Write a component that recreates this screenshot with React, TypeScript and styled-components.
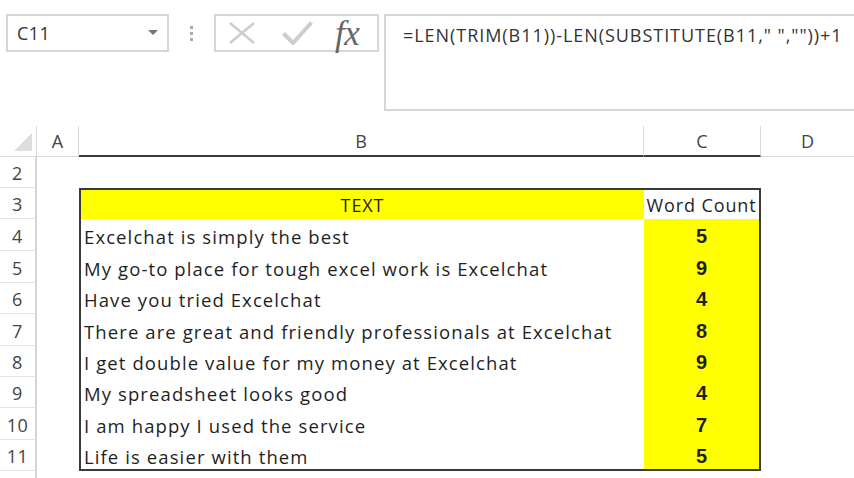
import React from "react";
import styled, { createGlobalStyle } from "styled-components";

const Global = createGlobalStyle`
  html, body { margin: 0; padding: 0; background: #fff; }
  body { font-family: "Open Sans", "Liberation Sans", sans-serif; }
`;

const FONT = `"Open Sans", "Liberation Sans", sans-serif`;
const LIGHT = "#d9d9d9";
const DARK = "#3a3a3a";
const YELLOW = "#ffff00";

const Page = styled.div`
  width: 854px;
  height: 478px;
  overflow: hidden;
  background: #fff;
  display: flex;
  flex-direction: column;
`;

const Toolbar = styled.div`
  display: flex;
  align-items: flex-start;
  box-sizing: border-box;
  height: 126px;
  padding: 14px 0 0 6px;
  flex-shrink: 0;
  & > * { flex-shrink: 0; }
`;

const NameBox = styled.div`
  box-sizing: border-box;
  width: 163px;
  height: 38px;
  border: 2px solid #d6d6d6;
  display: flex;
  align-items: center;
  justify-content: space-between;
  padding: 0 9px 0 9px;
  font-family: ${FONT};
  font-size: 18px;
  letter-spacing: 0.4px;
  color: #333;
`;

const DropArrow = styled.span`
  width: 0;
  height: 0;
  border-left: 5px solid transparent;
  border-right: 5px solid transparent;
  border-top: 5px solid #777;
  margin-bottom: 2px;
`;

const DotsArea = styled.div`
  box-sizing: border-box;
  width: 45px;
  height: 38px;
  display: flex;
  flex-direction: column;
  justify-content: center;
  gap: 3px;
  padding-left: 21px;
`;

const Dot = styled.span`
  width: 3px;
  height: 3px;
  background: #aaa;
`;

const ButtonBox = styled.div`
  box-sizing: border-box;
  width: 165px;
  height: 38px;
  border: 2px solid #d6d6d6;
  display: flex;
  align-items: center;
  padding-left: 13px;
`;

const IconSlot = styled.span<{ $ml: number }>`
  display: flex;
  margin-left: ${(p) => p.$ml}px;
`;

const FxText = styled.span`
  font-family: "Liberation Serif", "DejaVu Serif", serif;
  font-style: italic;
  font-size: 35px;
  color: #666;
  margin-left: 22px;
  line-height: 1;
  margin-top: 1px;
  letter-spacing: -0.5px;
`;

const FormulaBox = styled.div`
  box-sizing: border-box;
  margin-left: 5px;
  width: 490px;
  height: 97px;
  border: 2px solid #d6d6d6;
  padding: 8px 0 0 17px;
  font-family: ${FONT};
  font-size: 18px;
  letter-spacing: 0.95px;
  line-height: 22px;
  color: #333;
  white-space: nowrap;
`;

const Sheet = styled.div`
  display: flex;
  flex-direction: column;
`;

const HeaderRow = styled.div`
  display: flex;
  height: 31px;
`;

const ColHeader = styled.div<{ $w?: number; $dark?: boolean; $last?: boolean }>`
  box-sizing: border-box;
  ${(p) => (p.$w ? `width: ${p.$w}px; flex-shrink: 0;` : "flex: 1;")}
  height: 31px;
  display: flex;
  align-items: center;
  justify-content: center;
  position: relative;
  font-family: ${FONT};
  font-size: 18px;
  color: #444;
  border-right: ${(p) => (p.$last ? "none" : `1px solid ${LIGHT}`)};
  border-bottom: ${(p) => (p.$dark ? `2px solid ${DARK}` : `1px solid ${LIGHT}`)};
  padding-top: ${(p) => (p.$dark ? "1px" : "0")};
`;

const CornerTriangle = styled.span`
  position: absolute;
  right: 4px;
  bottom: 5px;
  width: 0;
  height: 0;
  border-left: 18px solid transparent;
  border-bottom: 18px solid #dedede;
`;

const Row = styled.div<{ $h: number }>`
  display: flex;
  height: ${(p) => p.$h}px;
`;

const RowHeader = styled.div`
  box-sizing: border-box;
  width: 37px;
  flex-shrink: 0;
  display: flex;
  align-items: flex-end;
  justify-content: center;
  padding-bottom: 5px;
  font-family: ${FONT};
  font-size: 18px;
  letter-spacing: 0.5px;
  line-height: 1;
  color: #444;
  border-right: 2px solid #d4d4d4;
  border-bottom: 1px solid #e3e3e3;
`;

const Cell = styled.div<{
  $w?: number;
  $bg?: string;
  $left?: boolean;
  $right?: boolean;
  $top?: boolean;
  $bottom?: boolean;
  $align?: "left" | "center";
  $bold?: boolean;
  $head?: boolean;
}>`
  box-sizing: border-box;
  ${(p) => (p.$w ? `width: ${p.$w}px; flex-shrink: 0;` : "flex: 1;")}
  background: ${(p) => p.$bg || "#fff"};
  display: flex;
  align-items: flex-end;
  justify-content: ${(p) => (p.$align === "center" ? "center" : "flex-start")};
  padding-left: ${(p) => (p.$align === "center" ? "0" : "3px")};
  padding-bottom: ${(p) => (p.$bottom ? "3px" : "5px")};
  font-family: ${(p) => (p.$bold ? `"Liberation Sans", Arial, sans-serif` : FONT)};
  font-weight: ${(p) => (p.$bold ? 700 : 400)};
  font-size: ${(p) => (p.$bold ? "20px" : p.$head ? "18px" : "18.5px")};
  letter-spacing: ${(p) => (p.$bold ? "0" : p.$head ? "0.9px" : "1.1px")};
  line-height: 1;
  color: #1f1f1f;
  white-space: nowrap;
  border-left: ${(p) => (p.$left ? `2px solid ${DARK}` : "none")};
  border-right: ${(p) => (p.$right ? `2px solid ${DARK}` : "none")};
  border-top: ${(p) => (p.$top ? `2px solid ${DARK}` : "none")};
  border-bottom: ${(p) => (p.$bottom ? `2px solid ${DARK}` : "none")};
`;

type DataRow = { n: number; h: number; text: string; count: number };

const heights = [31, 31, 32, 32, 31, 32, 31, 31, 32, 31];

const data: DataRow[] = [
  { n: 4, h: heights[2], text: "Excelchat is simply the best", count: 5 },
  { n: 5, h: heights[3], text: "My go-to place for tough excel work is Excelchat", count: 9 },
  { n: 6, h: heights[4], text: "Have you tried Excelchat", count: 4 },
  { n: 7, h: heights[5], text: "There are great and friendly professionals at Excelchat", count: 8 },
  { n: 8, h: heights[6], text: "I get double value for my money at Excelchat", count: 9 },
  { n: 9, h: heights[7], text: "My spreadsheet looks good", count: 4 },
  { n: 10, h: heights[8], text: "I am happy I used the service", count: 7 },
  { n: 11, h: heights[9], text: "Life is easier with them", count: 5 },
];

const COLS = { a: 42, b: 565, c: 117 };

export default function App() {
  return (
    <Page>
      <Global />
      <Toolbar>
        <NameBox>
          <span>C11</span>
          <DropArrow />
        </NameBox>
        <DotsArea>
          <Dot />
          <Dot />
          <Dot />
        </DotsArea>
        <ButtonBox>
          <IconSlot $ml={0}>
            <svg width="26" height="22" viewBox="0 0 26 22">
              <path d="M1 1 L25 21 M25 1 L1 21" stroke="#cdcdcd" strokeWidth="2.6" fill="none" />
            </svg>
          </IconSlot>
          <IconSlot $ml={27}>
            <svg width="31" height="24" viewBox="0 0 31 24">
              <path d="M1.5 12.5 L11 22 L29.5 1.5" stroke="#cdcdcd" strokeWidth="4" fill="none" />
            </svg>
          </IconSlot>
          <FxText>fx</FxText>
        </ButtonBox>
        <FormulaBox>=LEN(TRIM(B11))-LEN(SUBSTITUTE(B11," ",""))+1</FormulaBox>
      </Toolbar>
      <Sheet>
        <HeaderRow>
          <ColHeader $w={37}>
            <CornerTriangle />
          </ColHeader>
          <ColHeader $w={COLS.a}>A</ColHeader>
          <ColHeader $w={COLS.b} $dark>
            B
          </ColHeader>
          <ColHeader $w={COLS.c} $dark>
            C
          </ColHeader>
          <ColHeader $last>D</ColHeader>
        </HeaderRow>
        <Row $h={heights[0]}>
          <RowHeader>2</RowHeader>
          <Cell $w={COLS.a} />
          <Cell $w={COLS.b} />
          <Cell $w={COLS.c} />
          <Cell />
        </Row>
        <Row $h={heights[1]}>
          <RowHeader>3</RowHeader>
          <Cell $w={COLS.a} />
          <Cell $w={COLS.b} $bg={YELLOW} $left $top $align="center" $head>
            TEXT
          </Cell>
          <Cell $w={COLS.c} $right $top $align="center" $head>
            Word Count
          </Cell>
          <Cell />
        </Row>
        {data.map((r, i) => {
          const last = i === data.length - 1;
          return (
            <Row key={r.n} $h={r.h}>
              <RowHeader>{r.n}</RowHeader>
              <Cell $w={COLS.a} />
              <Cell $w={COLS.b} $left $bottom={last}>
                {r.text}
              </Cell>
              <Cell $w={COLS.c} $bg={YELLOW} $right $bottom={last} $align="center" $bold>
                {r.count}
              </Cell>
              <Cell />
            </Row>
          );
        })}
        <Row $h={20}>
          <RowHeader />
          <Cell $w={COLS.a} />
          <Cell $w={COLS.b} />
          <Cell $w={COLS.c} />
          <Cell />
        </Row>
      </Sheet>
    </Page>
  );
}
